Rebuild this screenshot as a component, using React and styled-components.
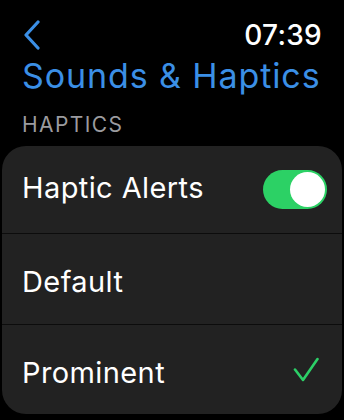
import styled, { createGlobalStyle } from 'styled-components';

const GlobalStyle = createGlobalStyle`
    html, body {
        margin: 0;
        padding: 0;
        background: #000;
    }
    body {
        font-family: Inter, 'Noto Sans', sans-serif;
        -webkit-font-smoothing: antialiased;
    }
`;

const Screen = styled.div`
    background: #000;
    color: #fff;
    display: flex;
    flex-direction: column;
    height: 420px;
    overflow: hidden;
    padding: 21px 2px 0;
    box-sizing: border-box;
    width: 344px;
`;

const Header = styled.header`
    align-items: center;
    display: flex;
    height: 28px;
    justify-content: space-between;
    padding: 0 20px 0 21px;
`;

const BackButton = styled.button`
    background: none;
    border: none;
    display: flex;
    padding: 0;
    svg {
        display: block;
    }
`;

const Time = styled.span`
    font-size: 28px;
    font-weight: 500;
    line-height: 28px;
    letter-spacing: 0.3px;
`;

const Title = styled.h1`
    color: #3b8fe6;
    font-size: 34px;
    font-weight: 400;
    letter-spacing: 0.9px;
    line-height: 34px;
    margin: 10px 0 0 20px;
`;

const SectionLabel = styled.h2`
    color: #9b9b9f;
    font-size: 21px;
    font-weight: 400;
    letter-spacing: 1.4px;
    line-height: 21px;
    margin: 21px 0 11px 20px;
`;

const Card = styled.div`
    background: #222222;
    border-radius: 24px;
    display: flex;
    flex-direction: column;
    overflow: hidden;
`;

const Row = styled.div`
    align-items: center;
    border-top: ${(p) => (p.$first ? 'none' : '1px solid #0c0c0c')};
    display: flex;
    height: ${(p) => p.$h}px;
    justify-content: space-between;
    padding: 0 ${(p) => p.$pr}px 0 20px;
`;

const Label = styled.span`
    font-size: 29px;
    font-weight: 400;
    letter-spacing: 0.4px;
    line-height: 29px;
    transform: translateY(${(p) => p.$dy || 0}px);
`;

const Switch = styled.div`
    background: #2cd165;
    border-radius: 20px;
    box-sizing: border-box;
    display: flex;
    height: 39px;
    justify-content: flex-end;
    padding: 2px;
    width: 64px;
`;

const Knob = styled.div`
    background: #fff;
    border-radius: 50%;
    height: 35px;
    width: 35px;
`;

const Chevron = () => (
    <svg width="18" height="30" viewBox="0 0 18 30">
        <path d="M15 2 L3 15 L15 28" fill="none" stroke="#3b8fe6" strokeWidth="3.2" strokeLinecap="round" strokeLinejoin="round" />
    </svg>
);

const Check = () => (
    <svg width="26" height="26" viewBox="0 0 26 26">
        <path d="M2 12.5 L10 23 L24.5 2" fill="none" stroke="#2ccf67" strokeWidth="2.6" strokeLinecap="round" strokeLinejoin="round" />
    </svg>
);

export default function App() {
    return (
        <>
            <GlobalStyle />
            <Screen>
                <Header>
                    <BackButton aria-label="Back">
                        <Chevron />
                    </BackButton>
                    <Time>07:39</Time>
                </Header>
                <Title>Sounds &amp; Haptics</Title>
                <SectionLabel>HAPTICS</SectionLabel>
                <Card>
                    <Row $first $h={87} $pr={15}>
                        <Label $dy={-2}>Haptic Alerts</Label>
                        <Switch>
                            <Knob />
                        </Switch>
                    </Row>
                    <Row $h={90} $pr={23}>
                        <Label $dy={2}>Default</Label>
                    </Row>
                    <Row $h={89} $pr={23}>
                        <Label $dy={3}>Prominent</Label>
                        <Check />
                    </Row>
                </Card>
            </Screen>
        </>
    );
}
